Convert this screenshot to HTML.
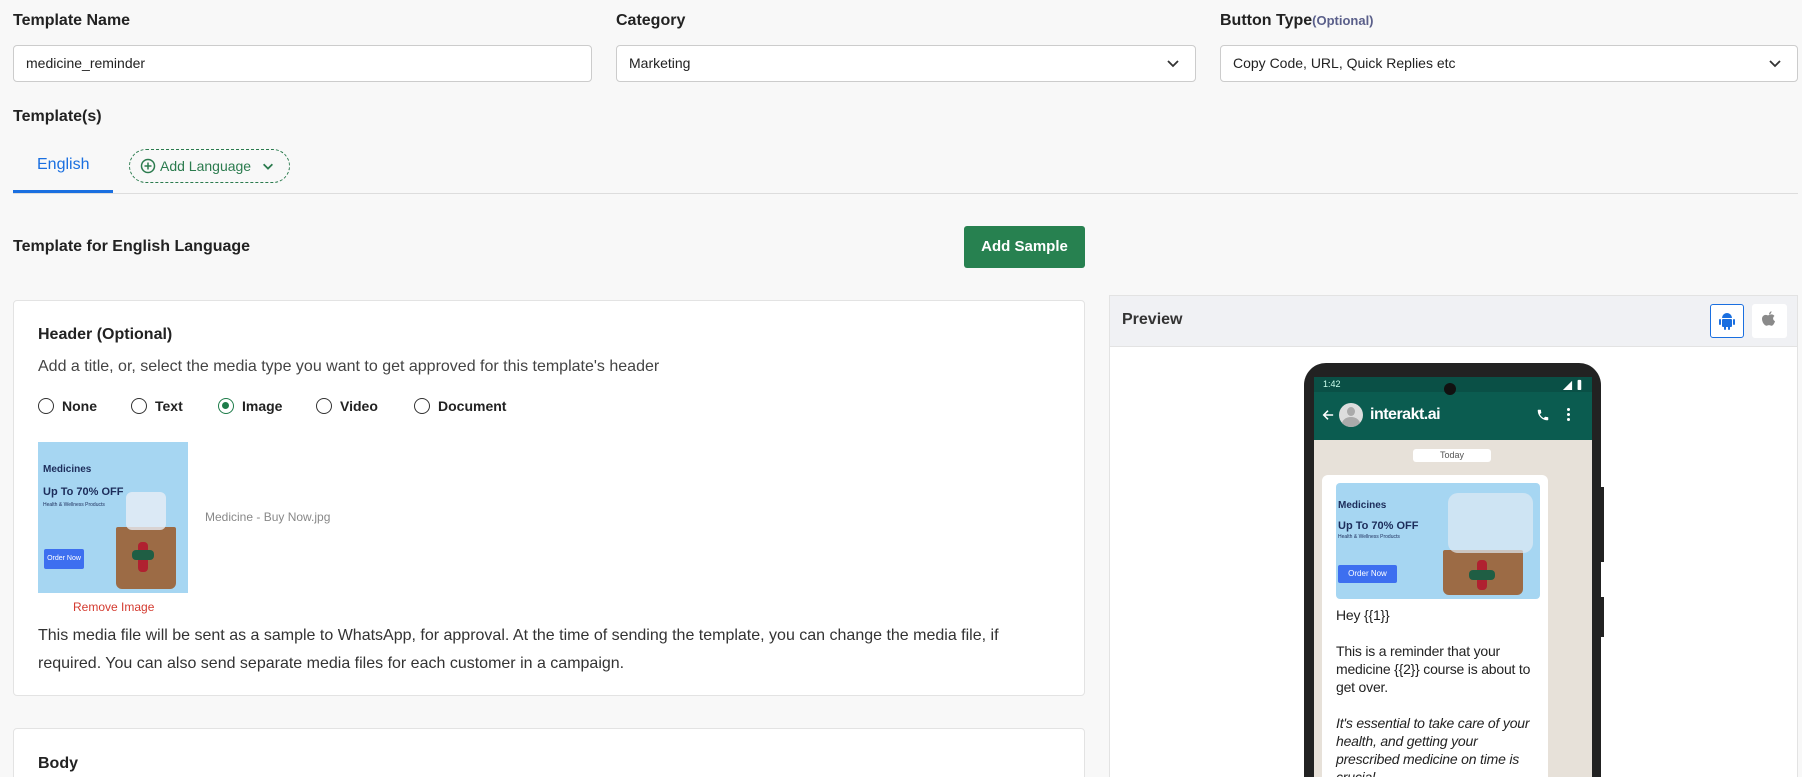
<!DOCTYPE html>
<html><head><meta charset="utf-8"><style>
*{box-sizing:border-box;margin:0;padding:0}
html,body{width:1802px;height:777px;overflow:hidden}
body{background:#f8f8f8;font-family:"Liberation Sans",sans-serif;color:#222;position:relative}
#wrap{position:absolute;left:0;top:0;width:1802px;height:777px;overflow:hidden}
.a{position:absolute}
.lbl{font-size:16px;font-weight:bold;color:#222}
.inp{position:absolute;top:45px;height:37px;border:1px solid #ccc;border-radius:4px;background:#fff;font-size:14px;padding:0 12px;line-height:35px;color:#222}
.chev{position:absolute;right:14px;top:9px}
.radio{position:absolute;top:398px;font-size:14px;font-weight:bold;color:#222;display:flex;align-items:center;gap:8px}
.radio i{display:inline-block;width:16px;height:16px;border:1.5px solid #333;border-radius:50%;position:relative}
.radio i.on{border-color:#1e7c4a}
.radio i.on:after{content:"";position:absolute;left:3px;top:3px;width:7px;height:7px;border-radius:50%;background:#1e7c4a}
.msg{position:absolute;left:1336px;font-size:14px;color:#222;line-height:18px;letter-spacing:-0.2px}
</style></head><body><div id="wrap">
<div class="a lbl" style="left:13px;top:12px">Template Name</div>
<div class="a lbl" style="left:616px;top:12px">Category</div>
<div class="a lbl" style="left:1220px;top:12px">Button Type<span style="font-size:13px;color:#5a5f8a">(Optional)</span></div>
<div class="inp" style="left:13px;width:579px">medicine_reminder</div>
<div class="inp" style="left:616px;width:580px">Marketing<svg class="chev" width="16" height="16" viewBox="0 0 16 16"><path d="M3 6l5 5 5-5" fill="none" stroke="#333" stroke-width="1.8"/></svg></div>
<div class="inp" style="left:1220px;width:578px">Copy Code, URL, Quick Replies etc<svg class="chev" width="16" height="16" viewBox="0 0 16 16"><path d="M3 6l5 5 5-5" fill="none" stroke="#333" stroke-width="1.8"/></svg></div>
<div class="a lbl" style="left:13px;top:108px">Template(s)</div>
<div class="a" style="left:37px;top:156px;font-size:16px;color:#1a6fe0">English</div>
<div class="a" style="left:13px;top:190px;width:100px;height:3px;background:#1a6fe0"></div>
<div class="a" style="left:13px;top:193px;width:1785px;height:1px;background:#ddd"></div>
<div class="a" style="left:129px;top:149px;width:161px;height:34px;border:1.3px dashed #2b7b4e;border-radius:17px;font-size:14px;color:#2b7b4e;line-height:32px;padding-left:10px">
<svg width="16" height="16" viewBox="0 0 16 16" style="vertical-align:-3px;margin-right:4px"><circle cx="8" cy="8" r="6.5" fill="none" stroke="#2b7b4e" stroke-width="1.5"/><path d="M8 4.5v7M4.5 8h7" stroke="#2b7b4e" stroke-width="1.5"/></svg>Add Language
<svg width="14" height="14" viewBox="0 0 16 16" style="vertical-align:-2px;margin-left:6px"><path d="M3 6l5 5 5-5" fill="none" stroke="#2b7b4e" stroke-width="2"/></svg></div>
<div class="a lbl" style="left:13px;top:238px">Template for English Language</div>
<div class="a" style="left:964px;top:226px;width:121px;height:42px;background:#278150;border-radius:3px;color:#fff;font-weight:bold;font-size:15px;text-align:center;line-height:42px">Add Sample</div>

<div class="a" style="left:13px;top:300px;width:1072px;height:396px;background:#fff;border:1px solid #e3e3e3;border-radius:4px"></div>
<div class="a" style="left:38px;top:326px;font-size:16px;font-weight:bold;color:#222">Header (Optional)</div>
<div class="a" style="left:38px;top:358px;font-size:16px;color:#444">Add a title, or, select the media type you want to get approved for this template's header</div>
<div class="radio" style="left:38px"><i></i>None</div>
<div class="radio" style="left:131px"><i></i>Text</div>
<div class="radio" style="left:218px"><i class="on"></i>Image</div>
<div class="radio" style="left:316px"><i></i>Video</div>
<div class="radio" style="left:414px"><i></i>Document</div>
<div class="a" style="left:38px;top:442px;width:150px;height:151px;background:#a6d6f2;overflow:hidden">
<div class="a" style="left:5px;top:22px;font-size:10px;font-weight:bold;color:#1c2c5a">Medicines</div>
<div class="a" style="left:5px;top:44px;font-size:11px;font-weight:bold;color:#1c2c5a">Up To 70% OFF</div>
<div class="a" style="left:5px;top:60px;font-size:5px;color:#1c2c5a">Health &amp; Wellness Products</div>
<div class="a" style="left:6px;top:107px;width:40px;height:20px;background:#3d6ff0;border-radius:2px;color:#fff;font-size:7px;text-align:center;line-height:20px">Order Now</div>
<div class="a" style="left:78px;top:85px;width:60px;height:62px;background:#9c6b45;border-radius:2px 2px 6px 6px"></div>
<div class="a" style="left:88px;top:50px;width:40px;height:38px;background:#e8eef5;border-radius:6px;opacity:.8"></div>
<div class="a" style="left:100px;top:100px;width:10px;height:30px;background:#b02130;border-radius:4px"></div>
<div class="a" style="left:94px;top:108px;width:22px;height:10px;background:#1f5e44;border-radius:4px"></div>
</div>
<div class="a" style="left:205px;top:510px;font-size:12px;color:#888">Medicine - Buy Now.jpg</div>
<div class="a" style="left:73px;top:600px;font-size:12px;color:#d43a2f">Remove Image</div>
<div class="a" style="left:38px;top:622px;width:1010px;font-size:16px;line-height:28px;color:#333">This media file will be sent as a sample to WhatsApp, for approval. At the time of sending the template, you can change the media file, if required. You can also send separate media files for each customer in a campaign.</div>
<div class="a" style="left:13px;top:728px;width:1072px;height:60px;background:#fff;border:1px solid #e3e3e3;border-radius:4px"></div>
<div class="a" style="left:38px;top:755px;font-size:16px;font-weight:bold">Body</div>

<div class="a" style="left:1109px;top:295px;width:689px;height:490px;background:#fff;border:1px solid #e3e3e3"></div>
<div class="a" style="left:1109px;top:295px;width:689px;height:52px;background:#f0f1f4;border:1px solid #e3e3e3"></div>
<div class="a" style="left:1122px;top:311px;font-size:16px;font-weight:bold;color:#333">Preview</div>
<div class="a" style="left:1710px;top:304px;width:34px;height:34px;border:1.5px solid #1a6fe0;border-radius:3px;background:#fff">
<svg width="18" height="20" viewBox="0 0 18 20" style="position:absolute;left:7px;top:6px"><path d="M4 7a5 5 0 0 1 10 0z" fill="#1a6fe0"/><rect x="4" y="8" width="10" height="8" rx="1" fill="#1a6fe0"/><rect x="1" y="8" width="2" height="6" rx="1" fill="#1a6fe0"/><rect x="15" y="8" width="2" height="6" rx="1" fill="#1a6fe0"/><rect x="6" y="15" width="2" height="4" rx="1" fill="#1a6fe0"/><rect x="10" y="15" width="2" height="4" rx="1" fill="#1a6fe0"/></svg></div>
<div class="a" style="left:1752px;top:304px;width:35px;height:34px;background:#fff;border-radius:3px">
<svg width="18" height="20" viewBox="0 0 18 20" style="position:absolute;left:8px;top:6px"><path d="M9 5c2-1 4-1 5.5 1-1.5 1-2 3-.5 4.5.3.3.7.6 1 .7-.5 2-2 4.5-3.5 4.5-1 0-1.5-.6-2.5-.6s-1.6.6-2.5.6C4.5 15.7 2 12 2 9c0-3 2.5-4.5 4.5-4 1 .2 1.6.6 2.5 0z" fill="#8a8a8a"/><path d="M9 4.5c0-1.5 1-3 2.5-3.3 0 1.6-1 3-2.5 3.3z" fill="#8a8a8a"/></svg></div>

<!-- phone -->
<div class="a" style="left:1304px;top:363px;width:297px;height:440px;background:#222;border-radius:22px"></div>
<div class="a" style="left:1600px;top:487px;width:4px;height:75px;background:#222"></div>
<div class="a" style="left:1600px;top:597px;width:4px;height:40px;background:#222"></div>
<div class="a" style="left:1314px;top:377px;width:278px;height:420px;background:#e7e1d9;overflow:hidden">
<div class="a" style="left:0;top:0;width:278px;height:63px;background:#0b5c50"></div>
<div class="a" style="left:0;top:0;width:278px;height:15px;background:#0a5046"></div>
<div class="a" style="left:9px;top:2px;font-size:9px;color:#cfe">1:42</div>
<div class="a" style="left:130px;top:6px;width:12px;height:12px;border-radius:50%;background:#111"></div>
<svg class="a" style="left:248px;top:2px" width="22" height="11" viewBox="0 0 22 12"><path d="M0 12L10 2v10z" fill="#fff"/><rect x="16" y="1" width="4" height="11" rx="1" fill="#fff"/></svg>
<svg class="a" style="left:8px;top:32px" width="12" height="12" viewBox="0 0 14 14"><path d="M13 7H2M7 2L2 7l5 5" fill="none" stroke="#fff" stroke-width="1.8"/></svg>
<div class="a" style="left:25px;top:26px;width:24px;height:24px;border-radius:50%;background:#ddd;overflow:hidden"><div class="a" style="left:8px;top:4px;width:8px;height:9px;border-radius:50%;background:#aaa"></div><div class="a" style="left:3px;top:14px;width:18px;height:14px;border-radius:50%;background:#aaa"></div></div>
<div class="a" style="left:56px;top:29px;font-size:16px;font-weight:bold;color:#fff;letter-spacing:-0.5px">interakt.ai</div>
<svg class="a" style="left:222px;top:31px" width="14" height="14" viewBox="0 0 24 24"><path d="M6.6 10.8c1.4 2.8 3.8 5.1 6.6 6.6l2.2-2.2c.3-.3.7-.4 1-.2 1.1.4 2.300.6 3.6.6.6 0 1 .4 1 1V20c0 .6-.4 1-1 1C10.6 21 3 13.4 3 4c0-.6.4-1 1-1h3.5c.6 0 1 .4 1 1 0 1.3.2 2.5.6 3.6.1.3 0 .7-.2 1z" fill="#fff"/></svg>
<div class="a" style="left:253px;top:31px;width:3px;height:3px;background:#fff;border-radius:50%;box-shadow:0 5px #fff,0 10px #fff"></div>
<div class="a" style="left:99px;top:72px;width:78px;height:13px;background:#fff;border-radius:3px;font-size:9px;text-align:center;line-height:13px;color:#555">Today</div>
<div class="a" style="left:8px;top:98px;width:226px;height:330px;background:#fff;border-radius:6px"></div>
<div class="a" style="left:22px;top:106px;width:204px;height:116px;background:#a6d6f2;border-radius:4px;overflow:hidden">
<div class="a" style="left:2px;top:17px;font-size:10px;font-weight:bold;color:#1c2c5a">Medicines</div>
<div class="a" style="left:2px;top:37px;font-size:11px;font-weight:bold;color:#1c2c5a">Up To 70% OFF</div>
<div class="a" style="left:2px;top:51px;font-size:5px;color:#1c2c5a">Health &amp; Wellness Products</div>
<div class="a" style="left:2px;top:82px;width:59px;height:18px;background:#3d6ff0;border-radius:2px;color:#fff;font-size:8px;text-align:center;line-height:18px">Order Now</div>
<div class="a" style="left:107px;top:67px;width:80px;height:45px;background:#9c6b45;border-radius:2px 2px 6px 6px"></div>
<div class="a" style="left:112px;top:10px;width:85px;height:60px;background:#dfe9f3;border-radius:10px;opacity:.7"></div>
<div class="a" style="left:141px;top:77px;width:10px;height:30px;background:#b02130;border-radius:4px"></div>
<div class="a" style="left:133px;top:87px;width:26px;height:10px;background:#1f5e44;border-radius:4px"></div>
</div>
</div>
<div class="msg" style="top:606px">Hey {{1}}</div>
<div class="msg" style="top:642px;width:210px">This is a reminder that your medicine {{2}} course is about to get over.</div>
<div class="msg" style="top:714px;width:200px;font-style:italic">It's essential to take care of your health, and getting your prescribed medicine on time is crucial.</div>
</div></body></html>
